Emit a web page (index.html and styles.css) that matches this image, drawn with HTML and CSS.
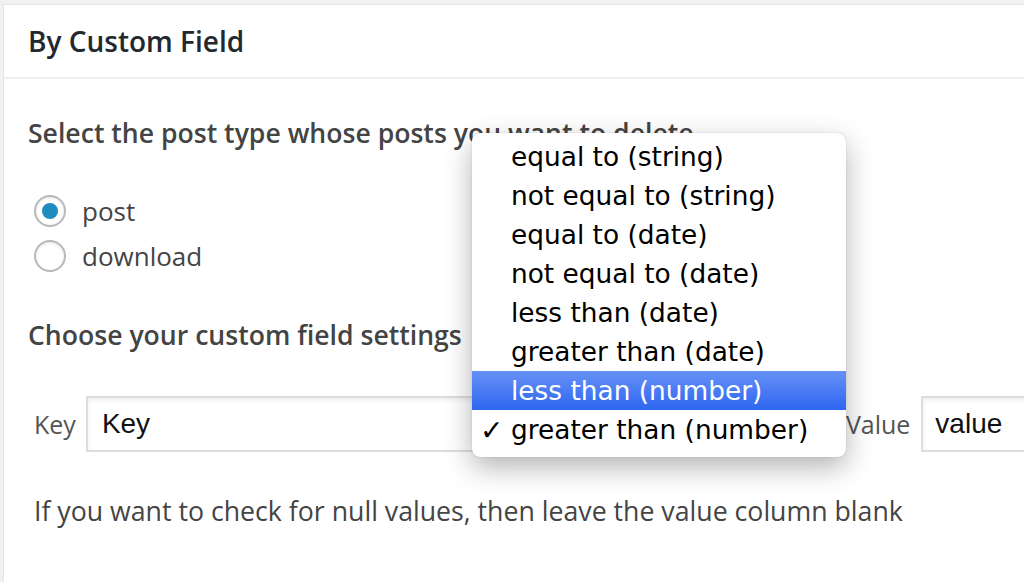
FILE: index.html
```html
<!DOCTYPE html>
<html lang="en">
<head>
    <meta charset="UTF-8">
    <meta name="viewport" content="width=device-width, initial-scale=1.0">
    <title>By Custom Field</title>
    <link rel="stylesheet" href="styles.css">
</head>
<body>

    <div class="postbox">

        <div class="postbox-head">
            <h3>By Custom Field</h3>
        </div>

        <div class="postbox-body">

            <h4>Select the post type whose posts you want to delete</h4>

            <div class="radio-list">
                <label class="radio-row">
                    <span class="radio checked"></span>
                    <span>post</span>
                </label>
                <label class="radio-row">
                    <span class="radio"></span>
                    <span>download</span>
                </label>
            </div>

            <h4 class="settings-title">Choose your custom field settings</h4>

            <div class="field-row">
                <label class="field-label">Key</label>
                <div class="text-input key-input">Key</div>
                <div class="operator-select"></div>
                <label class="field-label">Value</label>
                <div class="text-input value-input">value</div>
            </div>

            <p class="description">If you want to check for null values, then leave the value column blank</p>

        </div>

        <ul class="select-menu">
            <li>equal to (string)</li>
            <li>not equal to (string)</li>
            <li>equal to (date)</li>
            <li>not equal to (date)</li>
            <li>less than (date)</li>
            <li>greater than (date)</li>
            <li class="hover">less than (number)</li>
            <li class="selected">greater than (number)</li>
        </ul>

    </div>

</body>
</html>
```

FILE: styles.css
```css
body {
    margin: 0;
    background-color: #f1f1f1;
    font-family: "Open Sans", "Liberation Sans", sans-serif;
    color: #444;
    overflow: hidden;
}

.postbox {
    position: relative;
    margin: 4px 0 0 3px;
    height: 578px;
    overflow: hidden;
    background-color: #fff;
    border: 1px solid #e5e5e5;
    border-right: 0;
    border-bottom: 0;
}

.postbox-head {
    height: 72px;
    padding: 0 24px;
    display: flex;
    align-items: center;
    border-bottom: 2px solid #eee;
}

.postbox-head h3 {
    margin: 0;
    font-size: 28px;
    font-weight: 600;
    color: #23282d;
}

.postbox-body {
    padding: 0 24px;
}

h4 {
    margin: 37px 0 0 0;
    font-size: 26.6px;
    line-height: 34px;
    font-weight: 600;
    color: #444;
}

.radio-list {
    margin-top: 38px;
    padding-left: 6px;
}

.radio-row {
    height: 45px;
    display: flex;
    align-items: center;
    gap: 16px;
    font-size: 26px;
    color: #444;
    cursor: pointer;
}

.radio {
    width: 28px;
    height: 28px;
    border: 2px solid #b4b9be;
    border-radius: 50%;
    box-shadow: inset 0 1px 3px rgba(0, 0, 0, .1);
    display: flex;
    align-items: center;
    justify-content: center;
}

.radio.checked::after {
    content: "";
    width: 16px;
    height: 16px;
    border-radius: 50%;
    background-color: #1e8cbe;
}

.settings-title {
    margin-top: 40px;
}

.field-row {
    margin-top: 44px;
    padding-left: 6px;
    display: flex;
    align-items: center;
    height: 56px;
    white-space: nowrap;
}

.field-row > * {
    flex: none;
}

.field-label {
    font-size: 25px;
    color: #555;
    margin-right: 10px;
}

.text-input {
    box-sizing: border-box;
    height: 56px;
    padding: 0 14px;
    display: flex;
    align-items: center;
    border: 2px solid #ddd;
    box-shadow: inset 0 2px 4px rgba(0, 0, 0, .07);
    font-family: "Liberation Sans", Arial, sans-serif;
    font-size: 28px;
    color: #111;
}

.key-input {
    width: 460px;
}

.operator-select {
    width: 290px;
    height: 56px;
    margin-left: 10px;
}

.value-input {
    width: 160px;
    margin-left: 1px;
    padding-left: 12px;
}

.description {
    margin: 42px 0 0 6px;
    font-size: 26.7px;
    line-height: 34px;
    color: #444;
}

/* open native select menu */
.select-menu {
    position: absolute;
    left: 468px;
    top: 128px;
    width: 374px;
    margin: 0;
    padding: 4px 0 8px;
    list-style: none;
    background-color: #fff;
    border-radius: 8px;
    box-shadow: 0 0 1px rgba(0, 0, 0, .35), 0 10px 28px rgba(0, 0, 0, .3);
    font-family: "DejaVu Sans", "Liberation Sans", sans-serif;
    font-size: 26.4px;
    color: #000;
}

.select-menu li {
    position: relative;
    height: 39px;
    line-height: 39px;
    padding-left: 39px;
}

.select-menu li.hover {
    background: linear-gradient(#6791f7, #2e66f1);
    color: #fff;
}

.select-menu li.selected::before {
    content: "\2713";
    position: absolute;
    left: 8px;
    top: 1px;
    font-size: 28px;
    font-weight: bold;
}
```
